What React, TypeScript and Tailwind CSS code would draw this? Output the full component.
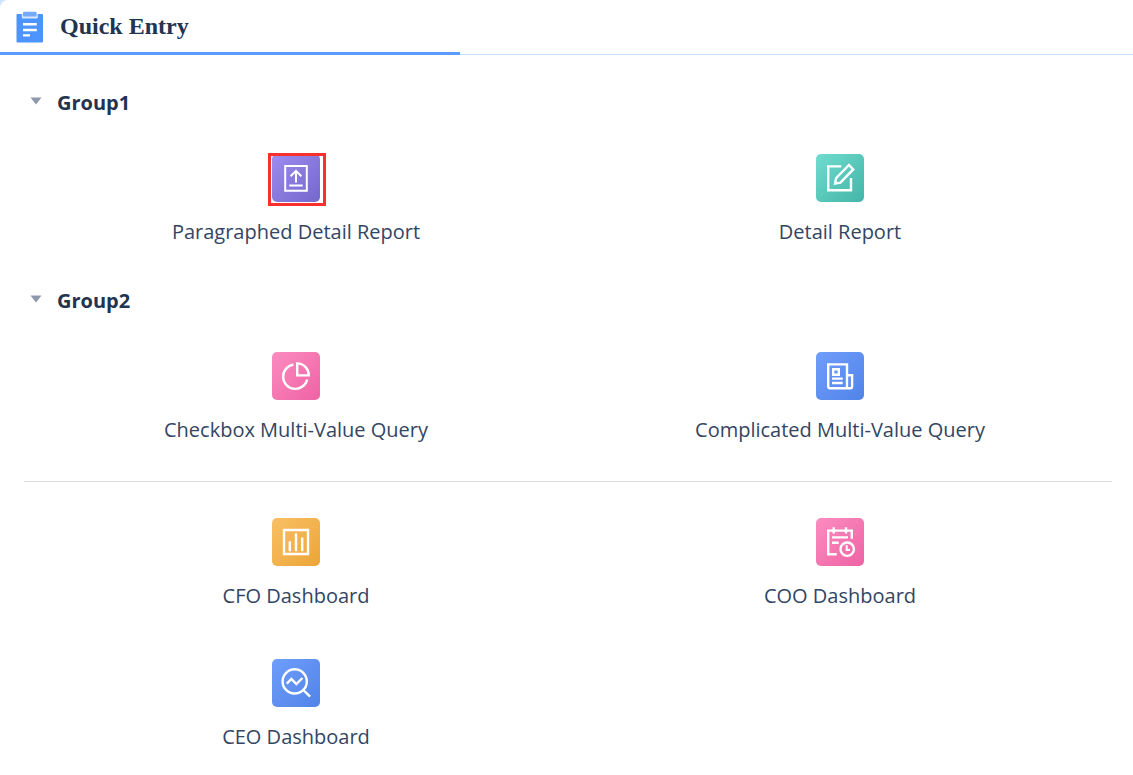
import clsx from "clsx";
import { type ReactElement, type ReactNode, useState } from "react";

interface Entry {
  name: string;
  tile: string;
  icon: ReactNode;
  highlighted?: boolean;
}

const purple = "from-[#9f8cf0] to-[#7467cc]";
const teal = "from-[#6fdccf] to-[#43b5a8]";
const pink = "from-[#fb8cc0] to-[#ee62a4]";
const blue = "from-[#6f9efb] to-[#5183e8]";
const orange = "from-[#f8c064] to-[#eca535]";

const group1: Entry[] = [
  {
    name: "Paragraphed Detail Report",
    tile: purple,
    highlighted: true,
    icon: (
      <>
        <path d="M13.2 12h21.6v24.8H13.2z" strokeWidth="2" />
        <path
          d="M24 28.5V17M18.6 22.2 24 16.8l5.4 5.4M17.3 31.5h13.4"
          strokeWidth="2"
        />
      </>
    ),
  },
  {
    name: "Detail Report",
    tile: teal,
    icon: (
      <>
        <path d="M25.3 12.4H12.2v23.8H35V24" />
        <path d="m33 11 4.2 4.4-12.8 13.2-5.3 1 .9-5.4z" />
      </>
    ),
  },
];

const group2: Entry[] = [
  {
    name: "Checkbox Multi-Value Query",
    tile: pink,
    icon: (
      <>
        <path d="M21.4 12.6a12.2 12.2 0 1 0 13.8 14.8" />
        <path d="M25.2 11.4v12h11.6a11.6 12 0 0 0-11.6-12z" />
      </>
    ),
  },
  {
    name: "Complicated Multi-Value Query",
    tile: blue,
    icon: (
      <>
        <path d="M31 36V12.4H12.2v22.2q0 1.6 1.6 1.6h20.6q1.7 0 1.7-1.7V23.2H31" />
        <path d="M17.2 17.2h5.6v5.6h-5.6zM16 26.6h10.7M16 31h10.7" />
      </>
    ),
  },
];

const dashboards: Entry[] = [
  {
    name: "CFO Dashboard",
    tile: orange,
    icon: (
      <>
        <path d="M12 12h24v24H12z" />
        <path d="M17.8 23.3v10M24 15.5v17.8M30.2 19.4v13.9" />
      </>
    ),
  },
  {
    name: "COO Dashboard",
    tile: pink,
    icon: (
      <>
        <path d="M20.7 36.2h-8.5V12.6h23.6v8.2M17.7 9.3v6.2M30 9.3v6.2M16 19.4h16M16 24.8h6.7" />
        <circle cx="31.2" cy="31.2" r="6.7" />
        <path d="M30.7 27.3V32H34" strokeWidth="2" />
      </>
    ),
  },
  {
    name: "CEO Dashboard",
    tile: blue,
    icon: (
      <>
        <circle cx="22.7" cy="22.4" r="12.1" />
        <path d="m31.3 31 6.8 6.7M14.8 24.6l4.6-4.6 5 5 6-6" />
      </>
    ),
  },
];

function ClipboardIcon(): ReactElement {
  return (
    <svg
      width="28"
      height="32"
      viewBox="0 0 28 32"
      className="mt-0.5"
      aria-hidden="true"
    >
      <rect x=".5" y="3" width="26.5" height="28.5" rx="1" fill="#4d94ff" />
      <path d="M5.8 2.5h16v4q0 1-1 1h-14q-1 0-1-1z" fill="#d6e6ff" />
      <rect x="7" y=".8" width="13.6" height="4.8" rx="1" fill="#74a9fb" />
      <path
        d="M7 13.2h13.8M7 19h13.8M7 24.4h7"
        stroke="#fff"
        strokeWidth="2.4"
      />
    </svg>
  );
}

function EntryGrid({ entries }: { entries: Entry[] }): ReactElement {
  return (
    <ul className="grid grid-cols-2 gap-y-[49px]">
      {entries.map((entry) => (
        <li key={entry.name} className="flex justify-center">
          <a href="#" className="flex flex-col items-center gap-4">
            <span
              className={clsx(
                "relative size-12 rounded-[5px] bg-linear-to-br",
                entry.tile,
              )}
            >
              <svg
                viewBox="0 0 48 48"
                className="size-12"
                fill="none"
                stroke="#fff"
                strokeWidth="2.4"
                aria-hidden="true"
              >
                {entry.icon}
              </svg>
              {entry.highlighted && (
                <span className="absolute -top-px -left-1 h-[53px] w-[58px] border-3 border-[#f8302e]" />
              )}
            </span>
            <span className="text-xl leading-7 whitespace-nowrap">
              {entry.name}
            </span>
          </a>
        </li>
      ))}
    </ul>
  );
}

function Group({
  title,
  entries,
}: {
  title: string;
  entries: Entry[];
}): ReactElement {
  const [open, setOpen] = useState<boolean>(true);

  return (
    <section className="mb-[41px]">
      <h2>
        <button
          type="button"
          aria-expanded={open}
          onClick={() => setOpen(!open)}
          className="flex items-center gap-[15px] pl-1.5 text-xl leading-7 font-bold text-[#22344f]"
        >
          <svg
            width="12"
            height="8"
            viewBox="0 0 12 8"
            className={clsx("mb-1", !open && "-rotate-90")}
            aria-hidden="true"
          >
            <path d="M.5.5h11L6 7.5z" fill="#8d98aa" />
          </svg>
          {title}
        </button>
      </h2>
      {open && (
        <div className="mt-[37px]">
          <EntryGrid entries={entries} />
        </div>
      )}
    </section>
  );
}

export default function App(): ReactElement {
  return (
    <div className="min-h-screen bg-[#cfe2ff] font-['Open_Sans','Noto_Sans',sans-serif] text-[#334563]">
      <div className="min-h-screen rounded-tl-lg bg-white">
        <header className="flex h-[55px] border-b border-[#c4dcff]">
          <div className="-mb-px flex w-[460px] items-center gap-4 border-b-3 border-[#5b9bff] pl-4">
            <ClipboardIcon />
            <h1 className="font-['Liberation_Serif',serif] text-2xl font-bold text-[#22344f]">
              Quick Entry
            </h1>
          </div>
        </header>

        <main className="pt-[34px] pr-[21px] pb-6 pl-6">
          <Group title="Group1" entries={group1} />
          <Group title="Group2" entries={group2} />
          <hr className="-mt-1 mb-9 border-[#dcdcdc]" />
          <EntryGrid entries={dashboards} />
        </main>
      </div>
    </div>
  );
}
